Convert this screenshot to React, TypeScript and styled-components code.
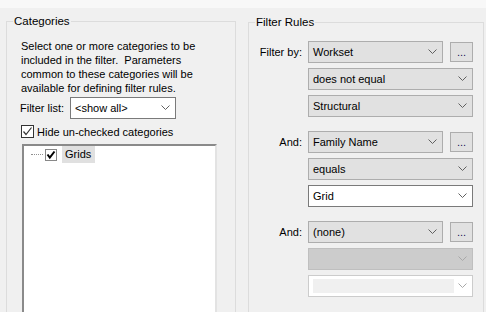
import React from "react";
import styled, { createGlobalStyle } from "styled-components";

const Global = createGlobalStyle`
  html, body { margin: 0; padding: 0; }
  body {
    background: #f0f0f0;
    font-family: "Liberation Sans", Arial, sans-serif;
    font-size: 11px;
    color: #000;
  }
`;

const Page = styled.div`
  width: 486px;
  height: 312px;
  overflow: hidden;
  background: #f0f0f0;
`;

const TopBand = styled.div`
  height: 8px;
  background: #f8f8f8;
`;

const Columns = styled.div`
  display: flex;
  gap: 12px;
  padding: 0 0 0 6px;
`;

const Group = styled.fieldset<{ $w: number; $top: number }>`
  box-sizing: border-box;
  width: ${(p) => p.$w}px;
  height: 330px;
  margin: ${(p) => p.$top}px 0 0 0;
  padding: 0;
  border: 1px solid #dcdcdc;
  min-width: 0;
`;

const Legend = styled.legend`
  margin-left: 6px;
  padding: 0 1px;
  line-height: 14px;
  font-size: 11.5px;
`;

const LeftBody = styled.div`
  padding: 11px 0 0 14px;
  display: flex;
  flex-direction: column;
`;

const Desc = styled.p`
  margin: 0;
  line-height: 14px;
  width: 200px;
`;

const FilterListRow = styled.div`
  display: flex;
  align-items: center;
  gap: 6px;
  margin-top: 2px;
  margin-left: -1px;
`;

type Variant = "normal" | "white" | "disabled" | "empty";

const Combo = styled.div<{ $w?: number; $variant?: Variant }>`
  box-sizing: border-box;
  position: relative;
  width: ${(p) => (p.$w ? `${p.$w}px` : "165px")};
  height: 22px;
  display: flex;
  align-items: center;
  padding-left: 4px;
  border: 1px solid
    ${(p) =>
      p.$variant === "white"
        ? "#7a7a7a"
        : p.$variant === "disabled"
        ? "#bfbfbf"
        : p.$variant === "empty"
        ? "#cccccc"
        : "#adadad"};
  background: ${(p) =>
    p.$variant === "white" || p.$variant === "empty"
      ? "#ffffff"
      : p.$variant === "disabled"
      ? "#cccccc"
      : "#e1e1e1"};
  color: #000;
`;

const EmptyInner = styled.div`
  width: 141px;
  height: 14px;
  background: #f0f0f0;
`;

const Chevron = styled.svg`
  position: absolute;
  right: 5px;
  top: 50%;
  margin-top: -3px;
`;

const CheckRow = styled.label`
  display: flex;
  align-items: center;
  gap: 3px;
  margin-top: 6px;
`;

const Box = styled.span<{ $size: number; $border: string }>`
  box-sizing: border-box;
  width: ${(p) => p.$size}px;
  height: ${(p) => p.$size}px;
  border: 1px solid ${(p) => p.$border};
  background: #fff;
  display: flex;
  align-items: center;
  justify-content: center;
`;

const Tree = styled.div`
  box-sizing: border-box;
  margin-top: 6px;
  margin-left: 1px;
  width: 195px;
  height: 200px;
  background: #fff;
  border-top: 2px solid #8a8a8a;
  border-left: 2px solid #8a8a8a;
  border-right: 2px solid #e3e3e3;
  padding: 0 0 0 7px;
`;

const TreeRow = styled.div`
  display: flex;
  align-items: center;
  height: 17px;
`;

const Dots = styled.span`
  width: 12px;
  border-top: 1px dotted #909090;
  margin-right: 2px;
`;

const TreeLabel = styled.span`
  background: #e0e0e0;
  height: 17px;
  line-height: 17px;
  padding: 0 4px 0 3px;
  margin-left: 5px;
`;

const RulesBody = styled.div`
  padding: 12px 0 0 0;
  display: flex;
  flex-direction: column;
  gap: 14px;
`;

const RuleGroup = styled.div`
  display: grid;
  grid-template-columns: 53px 165px;
  column-gap: 6px;
  row-gap: 5px;
  align-items: center;
`;

const RuleLabel = styled.span`
  text-align: right;
  white-space: nowrap;
`;

const FieldWithButton = styled.div`
  display: flex;
  align-items: center;
  gap: 7px;
`;

const DotsButton = styled.div`
  box-sizing: border-box;
  width: 23px;
  height: 20px;
  border: 1px solid #adadad;
  background: #e1e1e1;
  display: flex;
  align-items: flex-end;
  justify-content: center;
  padding-bottom: 4px;
  font-size: 11px;
  line-height: 10px;
  color: #1a0f5a;
`;

const Spacer = styled.span``;

function ChevronIcon({ color = "#606060" }: { color?: string }) {
  return (
    <Chevron width="9" height="6" viewBox="0 0 9 6">
      <polyline points="0.5,0.5 4.5,4.5 8.5,0.5" fill="none" stroke={color} strokeWidth="1" />
    </Chevron>
  );
}

function Select({ text, w, variant = "normal" }: { text?: string; w?: number; variant?: Variant }) {
  const chevColor = variant === "disabled" || variant === "empty" ? "#a8a8a8" : "#606060";
  return (
    <Combo $w={w} $variant={variant}>
      {variant === "empty" ? <EmptyInner /> : text}
      <ChevronIcon color={chevColor} />
    </Combo>
  );
}

function Rule({ label, field, op, value, disabled }: { label: string; field: string; op?: string; value?: string; disabled?: boolean }) {
  return (
    <RuleGroup>
      <RuleLabel>{label}</RuleLabel>
      <FieldWithButton>
        <Select text={field} w={135} />
        <DotsButton>...</DotsButton>
      </FieldWithButton>
      <Spacer />
      {disabled ? <Select variant="disabled" /> : <Select text={op} />}
      <Spacer />
      {disabled ? <Select variant="empty" /> : <Select text={value} variant={value === "Grid" ? "white" : "normal"} />}
    </RuleGroup>
  );
}

export default function App() {
  return (
    <Page>
      <Global />
      <TopBand />
      <Columns>
        <Group $w={230} $top={6}>
          <Legend>Categories</Legend>
          <LeftBody>
            <Desc>
              Select one or more categories to be included in the filter.&nbsp; Parameters common to these categories will be available for defining filter rules.
            </Desc>
            <FilterListRow>
              <span>Filter list:</span>
              <Select text="<show all>" w={106} variant="white" />
            </FilterListRow>
            <CheckRow>
              <Box $size={13} $border="#333">
                <svg width="11" height="11" viewBox="0 0 11 11">
                  <polyline points="1.5,5.5 4,8.5 9.5,1.5" fill="none" stroke="#333" strokeWidth="1.2" />
                </svg>
              </Box>
              <span>Hide un-checked categories</span>
            </CheckRow>
            <Tree>
              <TreeRow>
                <Dots />
                <Box $size={12} $border="#888">
                  <svg width="10" height="10" viewBox="0 0 10 10">
                    <polyline points="1.5,4.5 3.8,7.5 8.5,1.5" fill="none" stroke="#000" strokeWidth="2" />
                  </svg>
                </Box>
                <TreeLabel>Grids</TreeLabel>
              </TreeRow>
            </Tree>
          </LeftBody>
        </Group>
        <Group $w={236} $top={7}>
          <Legend>Filter Rules</Legend>
          <RulesBody>
            <Rule label="Filter by:" field="Workset" op="does not equal" value="Structural" />
            <Rule label="And:" field="Family Name" op="equals" value="Grid" />
            <Rule label="And:" field="(none)" disabled />
          </RulesBody>
        </Group>
      </Columns>
    </Page>
  );
}
